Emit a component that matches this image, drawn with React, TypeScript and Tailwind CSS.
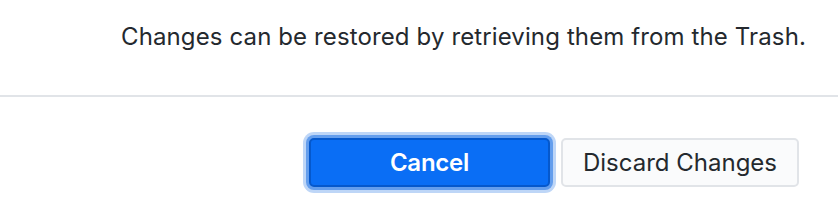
export default function App() {
  return (
    <div className="w-[838px] h-[218px] bg-white font-['Inter','Liberation_Sans',sans-serif] text-[#24292e]">
      <div className="h-[97px] border-b-2 border-[#e1e4e8] pl-[121px] pt-[22px]">
        <p className="text-[24px] leading-[30px] tracking-[0.005em]">Changes can be restored by retrieving them from the Trash.</p>
      </div>
      <div className="flex justify-end gap-[11px] pr-[39px] pt-[41px]">
        <button className="h-[49px] w-[241px] rounded-[5px] border-2 border-[#0558cc] bg-[#0a6ef5] text-[24px] font-semibold tracking-[-0.01em] text-white shadow-[0_0_0_3px_rgba(40,120,230,0.6),0_0_0_6px_rgba(40,120,230,0.3)]">
          Cancel
        </button>
        <button className="h-[49px] w-[238px] rounded-[5px] border-2 border-[#e1e4e8] bg-[#fafbfc] text-[24px] text-[#24292e]">
          Discard Changes
        </button>
      </div>
    </div>
  )
}
